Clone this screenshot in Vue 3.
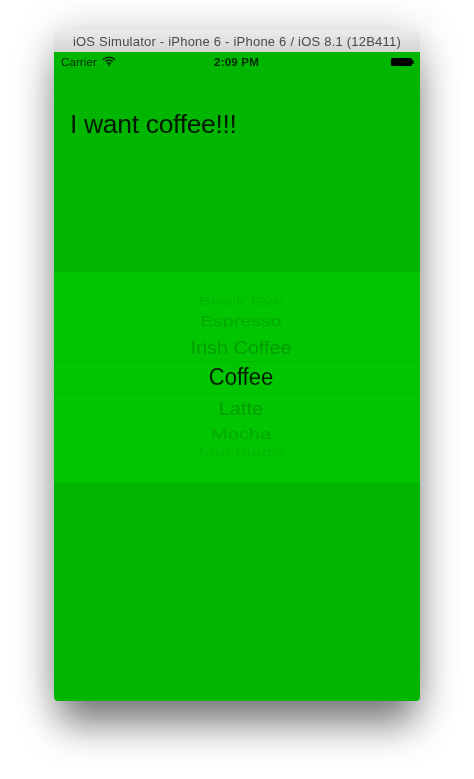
<script setup>
const items = [
  { name: 'Black Eye', h: 14, size: 19, sy: 0.55, o: 0.07, dy: -1 },
  { name: 'Espresso', h: 24, size: 19.5, sy: 0.74, o: 0.14, dy: 0.5 },
  { name: 'Irish Coffee', h: 28, size: 19.8, sy: 0.92, o: 0.2, dy: 1 },
  { name: 'Coffee', h: 33, size: 22, sy: 1.05, o: 0.85, dy: 0 },
  { name: 'Latte', h: 30, size: 20, sy: 0.95, o: 0.2, dy: -1 },
  { name: 'Mocha', h: 20, size: 20, sy: 0.74, o: 0.14, dy: 0 },
  { name: 'Machiatto', h: 18, size: 19.6, sy: 0.55, o: 0.06, dy: 0 }
]
</script>

<template>
  <div class="page">
    <div class="window">
      <div class="titlebar">iOS Simulator - iPhone 6 - iPhone 6 / iOS 8.1 (12B411)</div>
      <div class="screen">
        <div class="status">
          <div class="status-left">
            <span class="carrier">Carrier</span>
            <svg class="wifi" width="14" height="10" viewBox="0 0 14 10">
              <path d="M1 3.6C4.4 .5 9.6 .5 13 3.6" />
              <path d="M3.2 5.6C5.4 3.7 8.6 3.7 10.8 5.6" />
              <path d="M5.2 7.5C6.2 6.7 7.8 6.7 8.8 7.5" />
              <circle cx="7" cy="9" r="1" />
            </svg>
          </div>
          <span class="time">2:09 PM</span>
          <div class="battery"><span class="cell"></span><span class="tip"></span></div>
        </div>
        <div class="heading">I want coffee!!!</div>
        <div class="picker">
          <div
            v-for="item in items"
            :key="item.name"
            class="row"
            :class="{ selected: item.name === 'Coffee' }"
            :style="{ height: item.h + 'px' }"
          >
            <span
              class="label"
              :style="{ fontSize: item.size + 'px', opacity: item.o, transform: 'translateY(' + item.dy + 'px) scaleY(' + item.sy + ')' }"
            >{{ item.name }}</span>
          </div>
        </div>
      </div>
    </div>
  </div>
</template>

<style scoped>
.page {
  width: 474px;
  height: 779px;
  box-sizing: border-box;
  padding: 30px 54px 78px;
  overflow: hidden;
  background: #fff;
  font-family: "Liberation Sans", Arial, sans-serif;
  filter: blur(0.35px);
}
.window {
  height: 671px;
  display: flex;
  flex-direction: column;
  border-radius: 5px 5px 4px 4px;
  box-shadow: 0 30px 36px -6px rgba(0, 0, 0, 0.44), 0 4px 42px rgba(0, 0, 0, 0.24);
}
.titlebar {
  height: 22px;
  flex: none;
  display: flex;
  align-items: center;
  justify-content: center;
  border-radius: 5px 5px 0 0;
  background: linear-gradient(#ececec, #d4d4d4);
  color: #4a4a4a;
  font-size: 13px;
  letter-spacing: 0.22px;
  white-space: nowrap;
}
.screen {
  flex: 1;
  display: flex;
  flex-direction: column;
  background: #00b600;
  border-radius: 0 0 4px 4px;
  color: #000;
}
.status {
  height: 20px;
  flex: none;
  display: grid;
  grid-template-columns: 1fr auto 1fr;
  align-items: center;
  padding: 0 6px 0 7px;
  font-size: 11.5px;
  color: #022802;
}
.status-left {
  display: flex;
  align-items: center;
  gap: 5px;
}
.carrier {
  letter-spacing: 0.1px;
}
.wifi {
  display: block;
  margin-top: -2px;
}
.wifi path {
  fill: none;
  stroke: #022802;
  stroke-width: 1.5;
}
.wifi circle {
  fill: #022802;
}
.time {
  font-weight: 700;
  font-size: 11.5px;
  letter-spacing: 0.2px;
  transform: translateX(-1px);
}
.battery {
  display: flex;
  align-items: center;
  justify-content: flex-end;
}
.cell {
  width: 21px;
  height: 8px;
  background: #000;
  border-radius: 1.5px;
}
.tip {
  width: 2px;
  height: 4px;
  background: #022802;
  border-radius: 0 1px 1px 0;
}
.heading {
  height: 200px;
  flex: none;
  box-sizing: border-box;
  padding: 36px 0 0 16px;
  font-size: 26.5px;
  letter-spacing: -0.33px;
  line-height: 32px;
  color: #011a01;
}
.picker {
  height: 210px;
  flex: none;
  box-sizing: border-box;
  padding: 23px 0 0 8px;
  background: #00c500;
  display: flex;
  flex-direction: column;
}
.row {
  flex: none;
  display: flex;
  align-items: center;
  justify-content: center;
  white-space: nowrap;
}
.row.selected {
  box-sizing: border-box;
  margin-left: -8px;
  padding-left: 8px;
  border-top: 1px solid rgba(0, 0, 0, 0.05);
  border-bottom: 1px solid rgba(0, 0, 0, 0.05);
}
.label {
  display: block;
  color: #000;
  line-height: 1;
}
</style>
